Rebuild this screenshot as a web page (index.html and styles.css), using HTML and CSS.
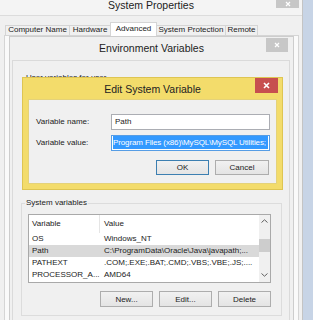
FILE: index.html
```html
<!DOCTYPE html>
<html lang="en">
<head>
<meta charset="utf-8">
<title>Edit System Variable</title>
<link rel="stylesheet" href="styles.css">
</head>
<body>
<div class="desktop">
  <section class="window sysprops">
    <header class="titlebar sys-titlebar">
      <span class="title">System Properties</span>
      <span class="close close-inactive sys-close"><svg width="6" height="6" viewBox="0 0 6 6"><path d="M1 1L5 5M5 1L1 5" stroke="#fff" stroke-width="1.2"/></svg></span>
    </header>
    <nav class="tabs">
      <span class="tab tab-cn">Computer Name</span>
      <span class="tab tab-hw">Hardware</span>
      <span class="tab tab-adv active">Advanced</span>
      <span class="tab tab-sp">System Protection</span>
      <span class="tab tab-rm">Remote</span>
    </nav>
    <div class="tab-panel"></div>
  </section>

  <section class="window envvars">
    <header class="titlebar env-titlebar">
      <span class="title">Environment Variables</span>
      <span class="close close-inactive env-close"><svg width="6" height="6" viewBox="0 0 6 6"><path d="M1 1L5 5M5 1L1 5" stroke="#fff" stroke-width="1.2"/></svg></span>
    </header>
    <div class="env-body">
      <div class="user-group"><span class="group-label">User variables for user</span></div>
      <fieldset class="group">
        <legend>System variables</legend>
        <div class="listview">
          <div class="lv-main">
            <div class="lv-row lv-head"><span>Variable</span><span>Value</span></div>
            <div class="lv-row"><span>OS</span><span>Windows_NT</span></div>
            <div class="lv-row lv-sel"><span>Path</span><span>C:\ProgramData\Oracle\Java\javapath;...</span></div>
            <div class="lv-row"><span>PATHEXT</span><span>.COM;.EXE;.BAT;.CMD;.VBS;.VBE;.JS;....</span></div>
            <div class="lv-row"><span>PROCESSOR_A...</span><span>AMD64</span></div>
          </div>
          <div class="scrollbar">
            <span class="sb-arrow"><svg width="7" height="4" viewBox="0 0 7 4"><path d="M0.5 3.5L3.5 0.8L6.5 3.5" fill="none" stroke="#606060" stroke-width="1"/></svg></span>
            <span class="sb-track"><span class="sb-thumb"></span></span>
            <span class="sb-arrow sb-down"><svg width="7" height="4" viewBox="0 0 7 4"><path d="M0.5 0.5L3.5 3.2L6.5 0.5" fill="none" stroke="#606060" stroke-width="1"/></svg></span>
          </div>
        </div>
        <div class="btn-row">
          <button class="btn">New...</button>
          <button class="btn">Edit...</button>
          <button class="btn">Delete</button>
        </div>
      </fieldset>
    </div>
  </section>

  <section class="window editvar">
    <header class="titlebar edit-titlebar">
      <span class="title">Edit System Variable</span>
      <span class="close edit-close"><svg width="7" height="7" viewBox="0 0 7 7"><path d="M1 1L6 6M6 1L1 6" stroke="#fff" stroke-width="1.6"/></svg></span>
    </header>
    <div class="edit-body">
      <div class="form">
        <label class="form-label">Variable name:</label>
        <div class="field">Path</div>
        <label class="form-label">Variable value:</label>
        <div class="field field-focus"><span class="sel">Program Files (x86)\MySQL\MySQL Utilities;</span></div>
      </div>
      <div class="edit-actions">
        <button class="btn btn-default">OK</button>
        <button class="btn btn-cancel">Cancel</button>
      </div>
    </div>
  </section>
</div>
</body>
</html>
```

FILE: styles.css
```css
* { box-sizing: border-box; }
html, body { margin: 0; padding: 0; }
body {
  width: 313px;
  height: 320px;
  overflow: hidden;
  background: #c7d4e6;
  font-family: "Liberation Sans", Arial, sans-serif;
  font-size: 8px;
  color: #222;
}
.desktop { position: relative; width: 313px; height: 320px; }
.window { position: absolute; }

/* title bars */
.titlebar { position: relative; text-align: center; font-size: 10.5px; color: #222; white-space: nowrap; }
.close { position: absolute; display: flex; align-items: center; justify-content: center; }
.close svg { display: block; }
.close-inactive { background: #c7c7c7; }

/* System Properties */
.sysprops {
  left: 0; top: 0; width: 303px; height: 320px;
  background: #f0f0f0;
  border-right: 1px solid #c4c4c4;
}
.sys-titlebar { height: 16px; line-height: 11px; border-bottom: 1px solid #dcdcdc; background: #f4f4f4; }
.sys-close { top: 0; right: 3px; width: 23px; height: 8px; }

.tabs { display: flex; align-items: flex-end; height: 19px; padding-left: 5px; }
.tab {
  height: 10px;
  line-height: 8px;
  border: solid #d5d5d5;
  border-width: 1px 0 0 1px;
  background: #f0f0f0;
  text-align: center;
  white-space: nowrap;
}
.tab-cn { width: 64px; }
.tab-hw { width: 41px; }
.tab-adv { width: 47px; }
.tab-sp { width: 68px; border-left-width: 0; }
.tab-rm { width: 33px; border-right-width: 1px; }
.tab.active {
  height: 14px;
  line-height: 12px;
  border-width: 1px 1px 0 1px;
  background: #fff;
  margin-bottom: -1px;
  position: relative;
  z-index: 1;
}
.tab-panel {
  margin: 0 3px 0 4px;
  height: 300px;
  border: 1px solid #d5d5d5;
  background: #fafafa;
}

/* Environment Variables */
.envvars {
  left: 9px; top: 36px; width: 285px; height: 300px;
  background: #f0f0f0;
  border: 1px solid #cdcdcd;
}
.env-titlebar { height: 23px; line-height: 23px; }
.env-close { top: 1px; right: 5px; width: 22px; height: 14px; }
.env-body {
  margin: 0 3px 0 2px;
  height: 270px;
  border: 1px solid #dadada;
  background: #f0f0f0;
  padding: 12px 7px 0 8px;
}
.user-group { height: 125px; padding-left: 5px; line-height: 10px; }

.group {
  margin: 0;
  min-width: 0;
  padding: 6px 10px 8px 6px;
  border: 1px solid #dcdcdc;
}
.group legend { padding: 0 1px; margin-left: -3px; line-height: 10px; font-size: 8px; }

.listview {
  display: flex;
  height: 69px;
  border: 1px solid #a9a9a9;
  background: #fff;
}
.lv-main { flex: 1; min-width: 0; }
.lv-row {
  display: grid;
  grid-template-columns: 71px 1fr;
  height: 12px;
  line-height: 12px;
  white-space: nowrap;
}
.lv-row > span { overflow: hidden; padding-left: 3px; }
.lv-row > span + span { padding-left: 4px; }
.lv-head { height: 18px; line-height: 18px; }
.lv-head > span:first-child { border-right: 1px solid #e5e5e5; }
.lv-sel { background: #d9d9d9; }

.scrollbar { width: 11px; display: flex; flex-direction: column; background: #f0f0f0; }
.sb-arrow { height: 12px; display: flex; align-items: center; justify-content: center; }
.sb-arrow svg { display: block; }
.sb-down { align-items: flex-start; padding-top: 3px; }
.sb-track { flex: 1; }
.sb-thumb { display: block; margin-top: 12px; height: 13px; background: #cdcdcd; }

.btn-row { display: flex; justify-content: flex-end; gap: 6px; margin-top: 8px; }
.btn {
  width: 53px;
  height: 16px;
  padding: 0;
  border: 1px solid #adadad;
  background: linear-gradient(#f1f1f1, #e4e4e4);
  font: inherit;
  color: #222;
}

/* Edit System Variable */
.editvar {
  left: 22px; top: 77px; width: 261px; height: 113px;
  background: #f3dc6b;
  border: 1px solid #dec552;
  display: flex;
  flex-direction: column;
}
.edit-titlebar { height: 21px; line-height: 22px; flex: none; }
.edit-close { top: 0; right: 4px; width: 23px; height: 15px; background: #c74f4f; }
.edit-body {
  flex: 1;
  margin: 0 5px 5px;
  border: 1px solid #e4d27a;
  background: #f0f0f0;
  padding: 14px 6px 0 7px;
}
.form {
  display: grid;
  grid-template-columns: 75px 159px;
  row-gap: 5px;
  align-items: center;
}
.form-label { line-height: 10px; }
.field {
  height: 16px;
  border: 1px solid #abadb3;
  background: #fff;
  padding: 0 3px;
  line-height: 14px;
  white-space: nowrap;
  overflow: hidden;
}
.field-focus { border-color: #569de5; padding: 0 1px; }
.sel {
  display: block;
  height: 13px;
  line-height: 13px;
  background: #3399ff;
  color: #fff;
  overflow: hidden;
  letter-spacing: -0.12px;
}
.edit-actions { display: flex; justify-content: flex-end; gap: 6px; margin-top: 9px; padding-right: 1px; }
.edit-actions .btn { height: 15px; }
.btn-default { border-color: #3c7fb1; }
.btn-cancel { width: 54px; }
```
